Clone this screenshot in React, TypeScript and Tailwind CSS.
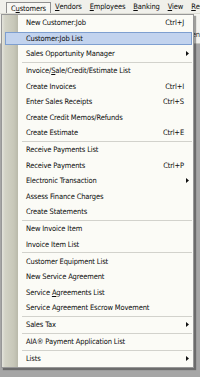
import type { ReactNode } from 'react';

type Item =
  | { kind: 'sep' }
  | { kind: 'item'; label: ReactNode; shortcut?: string; sub?: boolean; active?: boolean };

const sep: Item = { kind: 'sep' };
const it = (label: ReactNode, opts: { shortcut?: string; sub?: boolean; active?: boolean } = {}): Item => ({
  kind: 'item',
  label,
  ...opts,
});

const items: Item[] = [
  it('New Customer:Job', { shortcut: 'Ctrl+J' }),
  it('Customer:Job List', { active: true }),
  it('Sales Opportunity Manager', { sub: true }),
  sep,
  it(<>Invoice/<span className="underline">S</span>ale/Credit/Estimate List</>),
  it('Create Invoices', { shortcut: 'Ctrl+I' }),
  it('Enter Sales Receipts', { shortcut: 'Ctrl+S' }),
  it('Create Credit Memos/Refunds'),
  it('Create Estimate', { shortcut: 'Ctrl+E' }),
  sep,
  it('Receive Payments List'),
  it('Receive Payments', { shortcut: 'Ctrl+P' }),
  it('Electronic Transaction', { sub: true }),
  it('Assess Finance Charges'),
  it('Create Statements'),
  sep,
  it('New Invoice Item'),
  it('Invoice Item List'),
  sep,
  it('Customer Equipment List'),
  it('New Service Agreement'),
  it(<>Service <span className="underline">A</span>greements List</>),
  it('Service Agreement Escrow Movement'),
  sep,
  it('Sales Tax', { sub: true }),
  sep,
  it('AIA® Payment Application List'),
  sep,
  it('Lists', { sub: true }),
];

const menuBar = [
  { pre: 'C', key: 'u', post: 'stomers' },
  { pre: '', key: 'V', post: 'endors' },
  { pre: '', key: 'E', post: 'mployees' },
  { pre: '', key: 'B', post: 'anking' },
  { pre: '', key: 'V', post: 'iew' },
  { pre: '', key: 'R', post: 'ep' },
];

function Arrow() {
  return (
    <svg width="3" height="5" viewBox="0 0 3 5" className="block">
      <path d="M0 0 L3 2.5 L0 5 Z" fill="#111" />
    </svg>
  );
}

export default function App() {
  return (
    <div
      className="relative w-[200px] h-[377px] overflow-hidden bg-[#a6a6a6] text-[#0c0c0c] text-[7.5px] leading-none tracking-[-0.15px]"
      style={{ fontFamily: '"DejaVu Sans Condensed", "Liberation Sans", sans-serif' }}
    >
      {/* Menu bar */}
      <div className="flex h-[14px] items-stretch bg-[#f0f0eb] pl-[6px] border-b border-[#dcdcd4]">
        {menuBar.map((m, i) => (
          <div
            key={i}
            className={`flex items-center px-[4px] pt-[1px] whitespace-nowrap ${
              i === 0 ? 'border border-b-0 border-[#8f8f8f] bg-[#f7f7f3] mt-[2px] px-[3px] pt-0' : ''
            }`}
          >
            {m.pre}
            <span className="underline">{m.key}</span>
            {m.post}
          </div>
        ))}
      </div>

      {/* Toolbar behind the menu */}
      <div className="flex h-[30px] bg-[#f3f3ef] border-b border-[#c8c8c0]">
        <div className="ml-auto mt-[17px] -mr-[4px] whitespace-nowrap text-[#333]">ene</div>
      </div>

      {/* Dropdown */}
      <div className="absolute left-[1px] top-[14px] w-[193px] border border-[#979797] shadow-[2px_2px_1px_rgba(0,0,0,0.35)] bg-[linear-gradient(to_right,#e4e4dc_0px,#d3d3c6_3px,#c7c7b8_12px,#b9b9aa_16px,#fbfbf6_16px)]">
        {items.map((item, i) =>
          item.kind === 'sep' ? (
            <div key={i} className="flex h-[1.5px] items-center pl-[20px] pr-[1px]">
              <div className="h-px flex-1 bg-[#d2d2cc]" />
            </div>
          ) : (
            <div key={i} className="ml-[3px] mr-px h-[15.5px] py-px">
              <div
                className={`flex h-full items-center pl-[20px] ${
                  item.active ? 'border border-[#7e9fd0] bg-[#c2d3ee] pl-[19px]' : 'border border-transparent'
                }`}
              >
                <span className="flex-1 whitespace-nowrap">{item.label}</span>
                {item.shortcut && <span className="whitespace-nowrap">{item.shortcut}</span>}
                <span className="flex w-[7px] justify-start pl-[2px]">{item.sub && <Arrow />}</span>
              </div>
            </div>
          )
        )}
      </div>
    </div>
  );
}
